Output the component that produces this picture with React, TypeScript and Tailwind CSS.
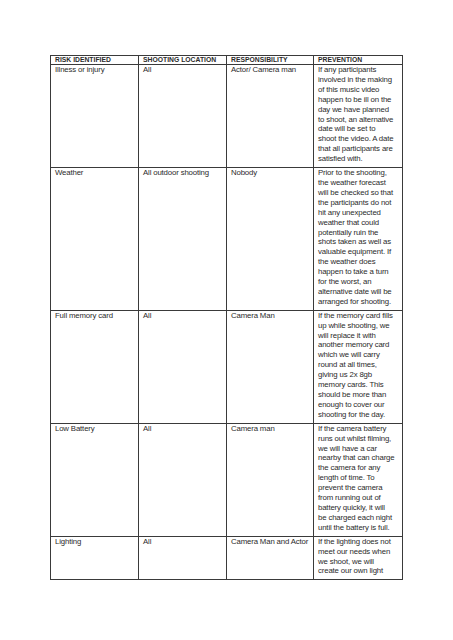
import React from 'react';

interface RiskRow {
  risk: string;
  location: string;
  responsibility: string;
  prevention: string[];
}

const ROWS: RiskRow[] = [
  {
    risk: 'Illness or injury',
    location: 'All',
    responsibility: 'Actor/ Camera man',
    prevention: [
      'If any participants',
      'involved in the making',
      'of this music video',
      'happen to be ill on the',
      'day we have planned',
      'to shoot, an alternative',
      'date will be set to',
      'shoot the video. A date',
      'that all participants are',
      'satisfied with.',
    ],
  },
  {
    risk: 'Weather',
    location: 'All outdoor shooting',
    responsibility: 'Nobody',
    prevention: [
      'Prior to the shooting,',
      'the weather forecast',
      'will be checked so that',
      'the participants do not',
      'hit any unexpected',
      'weather that could',
      'potentially ruin the',
      'shots taken as well as',
      'valuable equipment. If',
      'the weather does',
      'happen to take a turn',
      'for the worst, an',
      'alternative date will be',
      'arranged for shooting.',
    ],
  },
  {
    risk: 'Full memory card',
    location: 'All',
    responsibility: 'Camera Man',
    prevention: [
      'If the memory card fills',
      'up while shooting, we',
      'will replace it with',
      'another memory card',
      'which we will carry',
      'round at all times,',
      'giving us 2x 8gb',
      'memory cards. This',
      'should be more than',
      'enough to cover our',
      'shooting for the day.',
    ],
  },
  {
    risk: 'Low Battery',
    location: 'All',
    responsibility: 'Camera man',
    prevention: [
      'If the camera battery',
      'runs out whilst filming,',
      'we will have a car',
      'nearby that can charge',
      'the camera for any',
      'length of time. To',
      'prevent the camera',
      'from running out of',
      'battery quickly, it will',
      'be charged each night',
      'until the battery is full.',
    ],
  },
  {
    risk: 'Lighting',
    location: 'All',
    responsibility: 'Camera Man and Actor',
    prevention: [
      'If the lighting does not',
      'meet our needs when',
      'we shoot, we will',
      'create our own light',
    ],
  },
];

const HEADERS = ['RISK IDENTIFIED', 'SHOOTING LOCATION', 'RESPONSIBILITY', 'PREVENTION'];

const cell = 'border border-[#3a3a3a] align-top px-[4px] pt-[0px] pb-[3px] whitespace-nowrap';

export default function App() {
  return (
    <div
      className="min-h-[640px] w-[453px] bg-white pl-[50px] pt-[55px] text-[#2b2b2b]"
      style={{ fontFamily: '"Liberation Sans", Arial, sans-serif' }}
    >
      <table className="w-[352px] table-fixed border-collapse text-[7.8px] leading-[9.9px] tracking-[-0.15px]">
        <colgroup>
          <col className="w-[88px]" />
          <col className="w-[88px]" />
          <col className="w-[87px]" />
          <col className="w-[89px]" />
        </colgroup>
        <thead>
          <tr>
            {HEADERS.map((h) => (
              <th
                key={h}
                className="border border-[#3a3a3a] px-[4px] pt-[0px] pb-[0px] text-left align-top text-[6.8px] font-bold leading-[8px] tracking-normal whitespace-nowrap"
              >
                {h}
              </th>
            ))}
          </tr>
        </thead>
        <tbody>
          {ROWS.map((row) => (
            <tr key={row.risk}>
              <td className={cell}>{row.risk}</td>
              <td className={cell}>{row.location}</td>
              <td className={cell}>{row.responsibility}</td>
              <td className={cell}>
                {row.prevention.map((line, i) => (
                  <div key={i}>{line}</div>
                ))}
              </td>
            </tr>
          ))}
        </tbody>
      </table>
    </div>
  );
}
